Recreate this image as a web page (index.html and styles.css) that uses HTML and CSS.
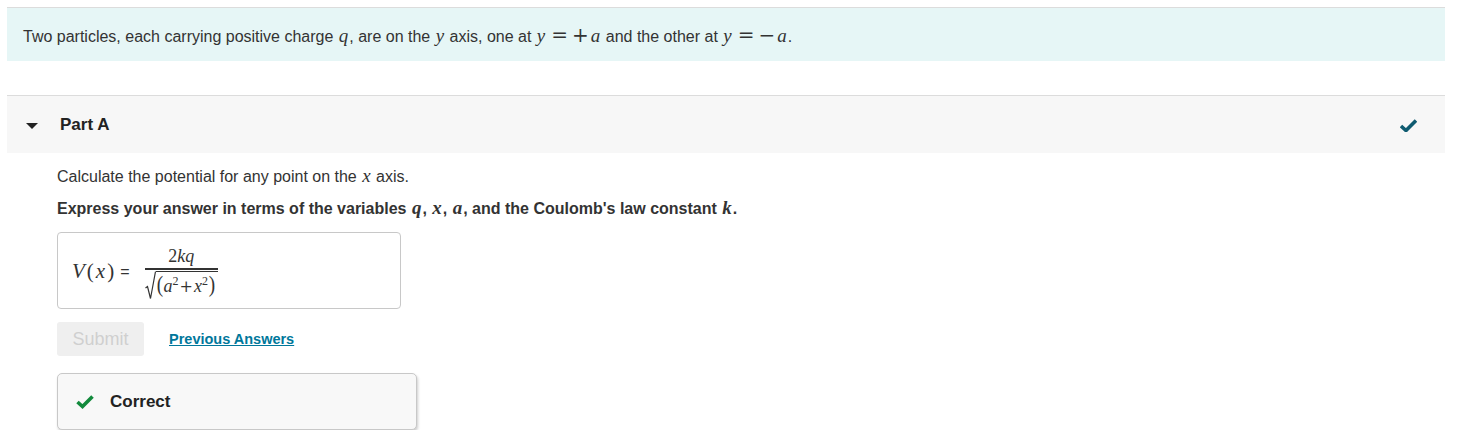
FILE: index.html
```html
<!DOCTYPE html>
<html lang="en">
<head>
    <meta charset="UTF-8">
    <title>Part A</title>
    <link rel="stylesheet" href="styles.css">
</head>
<body>
    <!-- Problem intro -->
    <div class="intro">
        Two particles, each carrying positive charge <span class="m">q</span>, are on the <span class="m">y</span> axis, one at <span class="m">y</span><span class="mo">=</span><span class="mu">+</span><span class="m">a</span> and the other at <span class="m">y</span><span class="mo">=</span><span class="mu">&minus;</span><span class="m">a</span>.
    </div>

    <!-- Part A -->
    <div class="part-header">
        <span class="caret"></span>
        <span class="part-title">Part A</span>
        <svg class="done" width="17" height="13" viewBox="0 0 17 13">
            <path d="M1 7 L6 11.5 L16 1.5" fill="none" stroke="#0f5b70" stroke-width="3.6"/>
        </svg>
    </div>

    <div class="part-body">
        <p class="question">Calculate the potential for any point on the <span class="m">x</span> axis.</p>
        <p class="instructions">Express your answer in terms of the variables <span class="m">q</span>, <span class="m">x</span>, <span class="m">a</span>, and the Coulomb's law constant <span class="m">k</span>.</p>

        <div class="answer-box">
            <span class="lhs"><span class="m">V</span><span class="mr">(</span><span class="m">x</span><span class="mr">)</span></span>
            <span class="eq">=</span>
            <span class="frac">
                <span class="num"><span class="mr">2</span><span class="m">kq</span></span>
                <span class="den">
                    <svg class="radic" width="11" height="29" viewBox="0 0 11 29">
                        <path d="M0.5 17 L2.5 15.5 L5.5 27.5 L10.5 0.5" fill="none" stroke="#333" stroke-width="1.2"/>
                    </svg>
                    <span class="radicand"><span class="paren">(</span><span class="m">a</span><sup>2</sup><span class="mop">+</span><span class="m">x</span><sup>2</sup><span class="paren">)</span></span>
                </span>
            </span>
        </div>

        <div class="actions">
            <button class="submit" disabled>Submit</button>
            <a class="prev" href="#">Previous Answers</a>
        </div>

        <div class="feedback">
            <svg width="18" height="14" viewBox="0 0 18 14">
                <path d="M1.5 7 L6.5 11.5 L16.5 1.5" fill="none" stroke="#128a3c" stroke-width="3.6"/>
            </svg>
            <span>Correct</span>
        </div>
    </div>
</body>
</html>
```

FILE: styles.css
```css
/* Global styles */
body {
    font-family: "Liberation Sans", Arial, sans-serif;
    font-size: 16px;
    color: #333;
    background-color: #fff;
    margin: 0;
    padding: 7px 21px 0 7px;
}

/* Math (inline) */
.m {
    font-family: "Liberation Serif", "Times New Roman", serif;
    font-style: italic;
    font-size: 19px;
    line-height: 0;
    padding: 0 1px;
}

.mr {
    font-family: "Liberation Serif", "Times New Roman", serif;
    font-size: 19px;
    line-height: 0;
}

/* binary and unary operators */
.mo,
.mu,
.mop {
    font-family: "DejaVu Serif", serif;
    font-size: 20px;
    line-height: 0;
}

.mo {
    padding: 0 4px 0 5px;
}

.mu {
    padding-right: 1px;
}

/* Intro box */
.intro {
    background-color: #e6f6f6;
    border-top: 1px solid #dcdcdc;
    padding: 19px 16px 14px;
    line-height: 20px;
}

/* Part header */
.part-header {
    margin-top: 34px;
    background-color: #f7f7f7;
    border-top: 1px solid #dcdcdc;
    height: 57px;
    display: flex;
    align-items: center;
    padding: 0 28px 0 19px;
}

.caret {
    width: 0;
    height: 0;
    border-left: 6px solid transparent;
    border-right: 6px solid transparent;
    border-top: 6px solid #222;
    margin-top: 2px;
}

.part-title {
    font-size: 17px;
    font-weight: bold;
    color: #222;
    margin-left: 22px;
    flex: 1;
}

.done {
    margin-top: 1px;
}

/* Part body */
.part-body {
    padding: 14px 0 0 50px;
}

.question {
    margin: 0;
    line-height: 20px;
}

.instructions {
    margin: 12px 0 0;
    font-weight: bold;
    line-height: 20px;
}

/* Answer box */
.answer-box {
    margin-top: 13px;
    width: 344px;
    height: 77px;
    box-sizing: border-box;
    border: 1px solid #c8c8c8;
    border-radius: 4px;
    display: flex;
    align-items: center;
    padding-left: 14px;
}

.lhs {
    letter-spacing: 2px;
    margin-top: 2px;
}

.lhs .m,
.lhs .mr {
    font-size: 21px;
    line-height: 1;
    padding: 0;
}

.eq {
    font-size: 16px;
    margin-left: 4px;
    margin-top: 2px;
}

.frac {
    display: inline-flex;
    flex-direction: column;
    align-items: center;
    margin-left: 15px;
    margin-top: 6px;
}

.num {
    padding-bottom: 2px;
    border-bottom: 2px solid #333;
    width: 100%;
    text-align: center;
    line-height: 18px;
}

.num .m,
.num .mr {
    font-size: 18px;
    line-height: 18px;
    padding: 0;
}

.den {
    display: flex;
    align-items: flex-start;
    padding-top: 1px;
}

.radicand {
    border-top: 1px solid #333;
    padding-right: 2px;
    line-height: 27px;
    height: 27px;
}

.radicand .m {
    font-size: 18px;
    line-height: 1;
    padding: 0;
}

.radicand .paren {
    font-family: "Liberation Serif", serif;
    font-size: 24px;
    line-height: 1;
    display: inline-block;
    transform: scaleX(0.8);
}

.radicand .mop {
    font-size: 16px;
    line-height: 1;
    padding: 0 1px;
}

.radicand sup {
    font-family: "Liberation Serif", serif;
    font-size: 12px;
    vertical-align: 7px;
    line-height: 0;
}

/* Actions */
.actions {
    margin-top: 13px;
    display: flex;
    align-items: center;
}

.submit {
    background-color: #efefef;
    color: #cfcfcf;
    border: none;
    border-radius: 3px;
    font-family: "Liberation Sans", Arial, sans-serif;
    font-size: 18px;
    width: 87px;
    height: 34px;
    padding: 0;
}

.prev {
    margin-left: 25px;
    color: #00779b;
    font-weight: bold;
    font-size: 14.5px;
    text-decoration: underline;
}

/* Feedback */
.feedback {
    margin-top: 17px;
    width: 360px;
    height: 57px;
    box-sizing: border-box;
    background-color: #f8f8f8;
    border: 1px solid #c8c8c8;
    border-radius: 5px;
    box-shadow: 1px 2px 3px rgba(0, 0, 0, 0.2);
    display: flex;
    align-items: center;
    padding-left: 18px;
}

.feedback span {
    margin-left: 16px;
    font-size: 17px;
    font-weight: bold;
    color: #222;
}
```
